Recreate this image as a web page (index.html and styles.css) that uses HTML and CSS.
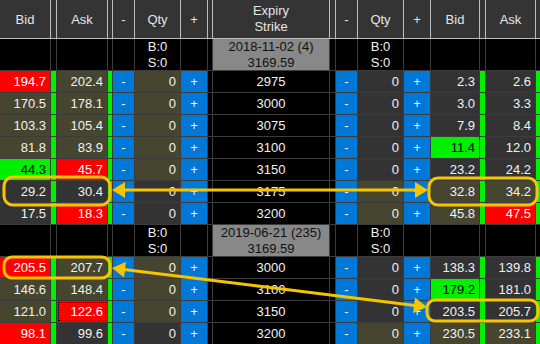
FILE: index.html
```html
<!DOCTYPE html>
<html lang="en">
<head>
    <meta charset="UTF-8">
    <title>Option Chain</title>
    <link rel="stylesheet" href="styles.css">
</head>
<body>
    <div class="chain">
        <div class="head row">
            <div class="c">Bid</div><div></div><div class="c">Ask</div><div></div>
            <div class="c">-</div><div class="c">Qty</div><div class="c">+</div><div></div>
            <div class="c two">Expiry<br>Strike</div><div></div>
            <div class="c">-</div><div class="c">Qty</div><div class="c">+</div>
            <div class="c">Bid</div><div></div><div class="c">Ask</div><div></div>
        </div>

        <div class="body">
            <!-- 2018-11-02 expiry -->
            <div class="row sub">
                <div class="bk"></div><div class="bk"></div><div class="bk"></div><div class="bk"></div>
                <div class="bk"></div><div class="bk c two">B:0<br>S:0</div><div class="bk"></div><div class="bk"></div>
                <div class="exp c two">2018-11-02 (4)<br>3169.59</div><div class="bk"></div>
                <div class="bk"></div><div class="bk c two">B:0<br>S:0</div><div class="bk"></div>
                <div class="bk"></div><div class="bk"></div><div class="bk"></div><div class="bk"></div>
            </div>
            <div class="row">
                <div class="rd n">194.7</div><div class="st"></div><div class="ol n">202.4</div><div class="st"></div>
                <div class="bl c">-</div><div class="ol n">0</div><div class="bl c">+</div><div class="bk"></div>
                <div class="bk c">2975</div><div class="bk"></div>
                <div class="bl c">-</div><div class="gy n">0</div><div class="bl c">+</div>
                <div class="gy n">2.3</div><div class="st"></div><div class="gy n">2.6</div><div class="st"></div>
            </div>
            <div class="row">
                <div class="ol n">170.5</div><div class="st"></div><div class="ol n">178.1</div><div class="st"></div>
                <div class="bl c">-</div><div class="ol n">0</div><div class="bl c">+</div><div class="bk"></div>
                <div class="bk c">3000</div><div class="bk"></div>
                <div class="bl c">-</div><div class="gy n">0</div><div class="bl c">+</div>
                <div class="gy n">3.0</div><div class="st"></div><div class="gy n">3.3</div><div class="st"></div>
            </div>
            <div class="row">
                <div class="ol n">103.3</div><div class="st"></div><div class="ol n">105.4</div><div class="st"></div>
                <div class="bl c">-</div><div class="ol n">0</div><div class="bl c">+</div><div class="bk"></div>
                <div class="bk c">3075</div><div class="bk"></div>
                <div class="bl c">-</div><div class="gy n">0</div><div class="bl c">+</div>
                <div class="gy n">7.9</div><div class="st"></div><div class="gy n">8.4</div><div class="st"></div>
            </div>
            <div class="row">
                <div class="ol n">81.8</div><div class="st"></div><div class="ol n">83.9</div><div class="st"></div>
                <div class="bl c">-</div><div class="ol n">0</div><div class="bl c">+</div><div class="bk"></div>
                <div class="bk c">3100</div><div class="bk"></div>
                <div class="bl c">-</div><div class="gy n">0</div><div class="bl c">+</div>
                <div class="gn n">11.4</div><div class="st"></div><div class="gy n">12.0</div><div class="st"></div>
            </div>
            <div class="row">
                <div class="gn n">44.3</div><div class="st"></div><div class="rd n">45.7</div><div class="st"></div>
                <div class="bl c">-</div><div class="ol n">0</div><div class="bl c">+</div><div class="bk"></div>
                <div class="bk c">3150</div><div class="bk"></div>
                <div class="bl c">-</div><div class="gy n">0</div><div class="bl c">+</div>
                <div class="gy n">23.2</div><div class="st"></div><div class="gy n">24.2</div><div class="st"></div>
            </div>
            <div class="row">
                <div class="gy n">29.2</div><div class="st"></div><div class="gy n">30.4</div><div class="st"></div>
                <div class="bl c">-</div><div class="gy n">0</div><div class="bl c">+</div><div class="bk"></div>
                <div class="bk c">3175</div><div class="bk"></div>
                <div class="bl c">-</div><div class="ol n">0</div><div class="bl c">+</div>
                <div class="ol n">32.8</div><div class="st"></div><div class="ol n">34.2</div><div class="st"></div>
            </div>
            <div class="row">
                <div class="gy n">17.5</div><div class="st"></div><div class="rd n">18.3</div><div class="st"></div>
                <div class="bl c">-</div><div class="gy n">0</div><div class="bl c">+</div><div class="bk"></div>
                <div class="bk c">3200</div><div class="bk"></div>
                <div class="bl c">-</div><div class="ol n">0</div><div class="bl c">+</div>
                <div class="ol n">45.8</div><div class="st"></div><div class="rd n">47.5</div><div class="st"></div>
            </div>

            <!-- 2019-06-21 expiry -->
            <div class="row sub">
                <div class="bk"></div><div class="bk"></div><div class="bk"></div><div class="bk"></div>
                <div class="bk"></div><div class="bk c two">B:0<br>S:0</div><div class="bk"></div><div class="bk"></div>
                <div class="exp c two">2019-06-21 (235)<br>3169.59</div><div class="bk"></div>
                <div class="bk"></div><div class="bk c two">B:0<br>S:0</div><div class="bk"></div>
                <div class="bk"></div><div class="bk"></div><div class="bk"></div><div class="bk"></div>
            </div>
            <div class="row">
                <div class="rd n">205.5</div><div class="st"></div><div class="ol n">207.7</div><div class="st"></div>
                <div class="bl c">-</div><div class="ol n">0</div><div class="bl c">+</div><div class="bk"></div>
                <div class="bk c">3000</div><div class="bk"></div>
                <div class="bl c">-</div><div class="gy n">0</div><div class="bl c">+</div>
                <div class="gy n">138.3</div><div class="st"></div><div class="gy n">139.8</div><div class="st"></div>
            </div>
            <div class="row">
                <div class="ol n">146.6</div><div class="st"></div><div class="ol n">148.4</div><div class="st"></div>
                <div class="bl c">-</div><div class="ol n">0</div><div class="bl c">+</div><div class="bk"></div>
                <div class="bk c">3100</div><div class="bk"></div>
                <div class="bl c">-</div><div class="gy n">0</div><div class="bl c">+</div>
                <div class="gn n">179.2</div><div class="st"></div><div class="gy n">181.0</div><div class="st"></div>
            </div>
            <div class="row">
                <div class="ol n">121.0</div><div class="st"></div><div class="rd n focus">122.6</div><div class="st"></div>
                <div class="bl c">-</div><div class="ol n">0</div><div class="bl c">+</div><div class="bk"></div>
                <div class="bk c">3150</div><div class="bk"></div>
                <div class="bl c">-</div><div class="gy n">0</div><div class="bl c">+</div>
                <div class="gy n">203.5</div><div class="st"></div><div class="gy n">205.7</div><div class="st"></div>
            </div>
            <div class="row">
                <div class="rd n">98.1</div><div class="st"></div><div class="gy n">99.6</div><div class="st"></div>
                <div class="bl c">-</div><div class="gy n">0</div><div class="bl c">+</div><div class="bk"></div>
                <div class="bk c">3200</div><div class="bk"></div>
                <div class="bl c">-</div><div class="ol n">0</div><div class="bl c">+</div>
                <div class="ol n">230.5</div><div class="st"></div><div class="ol n">233.1</div><div class="st"></div>
            </div>
        </div>

        <!-- call-outs drawn over the grid -->
        <svg class="marks" width="540" height="344" viewBox="0 0 540 344">
            <g fill="none" stroke="#f7c400" stroke-width="3">
                <rect x="4" y="177" width="106" height="28" rx="9"/>
                <rect x="429" y="178" width="108" height="27" rx="9"/>
                <rect x="4" y="257" width="106" height="21" rx="8"/>
                <rect x="427" y="300" width="111" height="21" rx="8"/>
                <line x1="124" y1="190" x2="416" y2="190"/>
                <line x1="124" y1="269.5" x2="415" y2="305.5"/>
            </g>
            <g fill="#f7c400">
                <polygon points="112,190 125,182 125,198"/>
                <polygon points="428,190 415,182 415,198"/>
                <polygon points="112,268 124,277.5 126,261.7"/>
                <polygon points="427,307 413,313.3 415,297.5"/>
            </g>
        </svg>
    </div>
</body>
</html>
```

FILE: styles.css
```css
body {
    margin: 0;
    background-color: #000;
    font-family: "Liberation Sans", Arial, sans-serif;
    font-size: 13px;
    color: #f2f2f2;
    overflow: hidden;
}
.chain {
    position: relative;
    width: 540px;
    height: 344px;
    overflow: hidden;
}
.row {
    display: grid;
    grid-template-columns: 50px 5px 50px 4px 21px 45px 26px 4px 116px 5px 21px 45px 26px 48px 5px 49px 5px;
    column-gap: 1px;
    height: 21px;
    width: 545px;
}
.row > div {
    line-height: 21px;
    white-space: nowrap;
    overflow: hidden;
}
.head {
    height: 38px;
    padding-bottom: 1px;
    background-color: #bdbdbd;
}
.head > div {
    background-color: #343434;
    color: #e6e6e6;
}
.body {
    display: flex;
    flex-direction: column;
    gap: 1px;
    background-color: #3c3c3c;
}
.sub {
    height: 31px;
}
.c {
    display: flex;
    align-items: center;
    justify-content: center;
    text-align: center;
}
.row > .two {
    line-height: 16px;
}
.n {
    text-align: right;
    padding-right: 4px;
}

/* cell colours */
.bk { background-color: #000; }
.ol { background-color: #46452f; }
.gy { background-color: #333333; }
.rd { background-color: #ff0000; color: #fff; }
.gn { background-color: #00f000; color: #000; }
.bl { background-color: #0078d7; }
.st { background-color: #00f000; }
.exp {
    background-color: #888;
    color: #111;
}
.focus {
    outline: 1px dotted #000;
    outline-offset: -2px;
}

.marks {
    position: absolute;
    top: 0;
    left: 0;
    pointer-events: none;
}
```
